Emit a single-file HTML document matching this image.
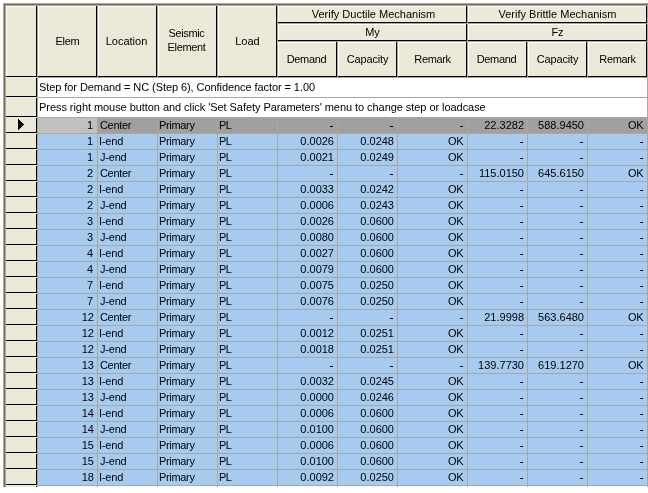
<!DOCTYPE html>
<html><head><meta charset="utf-8"><title>Safety Verification Table</title>
<style>
html,body{margin:0;padding:0;background:#fff;}
body{will-change:transform;}
body{width:648px;height:493px;position:relative;overflow:hidden;font-family:"Liberation Sans",sans-serif;font-size:11px;color:#000;}
div{position:absolute;box-sizing:border-box;white-space:nowrap;overflow:hidden;}
.h{background:#000;}
.h>i{position:absolute;left:0;top:0;right:1px;bottom:1px;background:#fff;}
.h>b{position:absolute;left:1px;top:1px;right:1px;bottom:1px;background:#ece9d8;font-weight:normal;text-align:center;}
.rh{left:6px;width:31px;background:#ece9d8;border-bottom:1px solid #000;}
.rh>i{position:absolute;right:0;top:1px;bottom:0;width:1px;background:#000;}
.c{background:#a6caf0;height:15px;line-height:15px;}
.r{text-align:right;padding-right:3px;}
.l{text-align:left;padding-left:2px;}
.c>u{font-size:0;line-height:0;text-decoration:none;position:absolute;right:4px;top:8px;width:3px;height:1px;background:#000;}
.g1{background:#c0c0c0;}
.g2{background:#a0a0a0;}
.w{background:#fff;height:19px;line-height:19px;padding-left:2px;}
</style></head><body>

<div style="left:3px;top:3px;width:645px;height:484px;background:#aca899"></div>
<div style="left:4px;top:4px;width:644px;height:483px;background:#716f64"></div>
<div style="left:5px;top:5px;width:643px;height:482px;background:#aca899"></div>
<div class="h" style="left:6px;top:6px;width:31px;height:71px"><i></i><b></b></div>
<div class="h" style="left:38px;top:6px;width:59px;height:71px"><i></i><b style="line-height:68px"><span style="letter-spacing:-0.3px;">Elem</span></b></div>
<div class="h" style="left:98px;top:6px;width:59px;height:71px"><i></i><b style="line-height:68px"><span style="position:relative;left:-1px;">Location</span></b></div>
<div class="h" style="left:158px;top:6px;width:59px;height:71px"><i></i><b style="line-height:14px;padding-top:19px"><span style="letter-spacing:-0.35px;position:relative;left:-1px;">Seismic<br>Element</span></b></div>
<div class="h" style="left:218px;top:6px;width:59px;height:71px"><i></i><b style="line-height:68px">Load</b></div>
<div class="h" style="left:278px;top:6px;width:189px;height:17px"><i></i><b style="line-height:15px"><span style="position:relative;left:1px;">Verify Ductile Mechanism</span></b></div>
<div class="h" style="left:468px;top:6px;width:179px;height:17px"><i></i><b style="line-height:15px">Verify Brittle Mechanism</b></div>
<div class="h" style="left:278px;top:24px;width:189px;height:17px"><i></i><b style="line-height:14px">My</b></div>
<div class="h" style="left:468px;top:24px;width:179px;height:17px"><i></i><b style="line-height:14px">Fz</b></div>
<div class="h" style="left:278px;top:42px;width:59px;height:35px"><i></i><b style="line-height:32px"><span style="letter-spacing:-0.35px;position:relative;left:-1px;">Demand</span></b></div>
<div class="h" style="left:338px;top:42px;width:59px;height:35px"><i></i><b style="line-height:32px"><span style="letter-spacing:-0.15px;">Capacity</span></b></div>
<div class="h" style="left:398px;top:42px;width:69px;height:35px"><i></i><b style="line-height:32px"><span style="letter-spacing:-0.35px;">Remark</span></b></div>
<div class="h" style="left:468px;top:42px;width:59px;height:35px"><i></i><b style="line-height:32px"><span style="letter-spacing:-0.35px;position:relative;left:-1px;">Demand</span></b></div>
<div class="h" style="left:528px;top:42px;width:59px;height:35px"><i></i><b style="line-height:32px"><span style="letter-spacing:-0.15px;">Capacity</span></b></div>
<div class="h" style="left:588px;top:42px;width:59px;height:35px"><i></i><b style="line-height:32px"><span style="letter-spacing:-0.35px;">Remark</span></b></div>
<div class="rh" style="top:77px;height:20px"><i></i></div>
<div class="rh" style="top:97px;height:20px"><i></i></div>
<div class="w" style="left:38px;top:78px;width:609px;letter-spacing:-0.074px;padding-left:1px">Step for Demand = NC (Step 6), Confidence factor = 1.00</div>
<div class="w" style="left:38px;top:98px;width:609px;letter-spacing:-0.057px;padding-left:1px">Press right mouse button and click 'Set Safety Parameters' menu to change step or loadcase</div>
<div class="rh" style="top:117px;height:16px"><i></i></div>
<div class="c r g1" style="left:38px;top:118px;width:59px"><span style="position:relative;left:-1px;">1</span></div>
<div class="c l g2" style="left:98px;top:118px;width:59px"><span style="letter-spacing:-0.33px;">Center</span></div>
<div class="c l g2" style="left:158px;top:118px;width:59px"><span style="letter-spacing:-0.33px;position:relative;left:-1px;">Primary</span></div>
<div class="c l g2" style="left:218px;top:118px;width:59px"><span style="letter-spacing:-0.5px;position:relative;left:-1px;">PL</span></div>
<div class="c r g2" style="left:278px;top:118px;width:59px"><u>-</u></div>
<div class="c r g2" style="left:338px;top:118px;width:59px"><u>-</u></div>
<div class="c r g2" style="left:398px;top:118px;width:69px"><u>-</u></div>
<div class="c r g2" style="left:468px;top:118px;width:59px">22.3282</div>
<div class="c r g2" style="left:528px;top:118px;width:59px">588.9450</div>
<div class="c r g2" style="left:588px;top:118px;width:59px"><span style="letter-spacing:-0.5px;position:relative;left:-1px;">OK</span></div>
<div class="rh" style="top:133px;height:16px"><i></i></div>
<div class="c r" style="left:38px;top:134px;width:59px"><span style="position:relative;left:-1px;">1</span></div>
<div class="c l" style="left:98px;top:134px;width:59px"><span style="letter-spacing:-0.2px;position:relative;left:-1px;">I-end</span></div>
<div class="c l" style="left:158px;top:134px;width:59px"><span style="letter-spacing:-0.33px;position:relative;left:-1px;">Primary</span></div>
<div class="c l" style="left:218px;top:134px;width:59px"><span style="letter-spacing:-0.5px;position:relative;left:-1px;">PL</span></div>
<div class="c r" style="left:278px;top:134px;width:59px">0.0026</div>
<div class="c r" style="left:338px;top:134px;width:59px">0.0248</div>
<div class="c r" style="left:398px;top:134px;width:69px"><span style="letter-spacing:-0.5px;position:relative;left:-1px;">OK</span></div>
<div class="c r" style="left:468px;top:134px;width:59px"><u>-</u></div>
<div class="c r" style="left:528px;top:134px;width:59px"><u>-</u></div>
<div class="c r" style="left:588px;top:134px;width:59px"><u>-</u></div>
<div class="rh" style="top:149px;height:16px"><i></i></div>
<div class="c r" style="left:38px;top:150px;width:59px"><span style="position:relative;left:-1px;">1</span></div>
<div class="c l" style="left:98px;top:150px;width:59px"><span style="letter-spacing:-0.2px;">J-end</span></div>
<div class="c l" style="left:158px;top:150px;width:59px"><span style="letter-spacing:-0.33px;position:relative;left:-1px;">Primary</span></div>
<div class="c l" style="left:218px;top:150px;width:59px"><span style="letter-spacing:-0.5px;position:relative;left:-1px;">PL</span></div>
<div class="c r" style="left:278px;top:150px;width:59px">0.0021</div>
<div class="c r" style="left:338px;top:150px;width:59px">0.0249</div>
<div class="c r" style="left:398px;top:150px;width:69px"><span style="letter-spacing:-0.5px;position:relative;left:-1px;">OK</span></div>
<div class="c r" style="left:468px;top:150px;width:59px"><u>-</u></div>
<div class="c r" style="left:528px;top:150px;width:59px"><u>-</u></div>
<div class="c r" style="left:588px;top:150px;width:59px"><u>-</u></div>
<div class="rh" style="top:165px;height:16px"><i></i></div>
<div class="c r" style="left:38px;top:166px;width:59px"><span style="position:relative;left:-1px;">2</span></div>
<div class="c l" style="left:98px;top:166px;width:59px"><span style="letter-spacing:-0.33px;">Center</span></div>
<div class="c l" style="left:158px;top:166px;width:59px"><span style="letter-spacing:-0.33px;position:relative;left:-1px;">Primary</span></div>
<div class="c l" style="left:218px;top:166px;width:59px"><span style="letter-spacing:-0.5px;position:relative;left:-1px;">PL</span></div>
<div class="c r" style="left:278px;top:166px;width:59px"><u>-</u></div>
<div class="c r" style="left:338px;top:166px;width:59px"><u>-</u></div>
<div class="c r" style="left:398px;top:166px;width:69px"><u>-</u></div>
<div class="c r" style="left:468px;top:166px;width:59px">115.0150</div>
<div class="c r" style="left:528px;top:166px;width:59px">645.6150</div>
<div class="c r" style="left:588px;top:166px;width:59px"><span style="letter-spacing:-0.5px;position:relative;left:-1px;">OK</span></div>
<div class="rh" style="top:181px;height:16px"><i></i></div>
<div class="c r" style="left:38px;top:182px;width:59px"><span style="position:relative;left:-1px;">2</span></div>
<div class="c l" style="left:98px;top:182px;width:59px"><span style="letter-spacing:-0.2px;position:relative;left:-1px;">I-end</span></div>
<div class="c l" style="left:158px;top:182px;width:59px"><span style="letter-spacing:-0.33px;position:relative;left:-1px;">Primary</span></div>
<div class="c l" style="left:218px;top:182px;width:59px"><span style="letter-spacing:-0.5px;position:relative;left:-1px;">PL</span></div>
<div class="c r" style="left:278px;top:182px;width:59px">0.0033</div>
<div class="c r" style="left:338px;top:182px;width:59px">0.0242</div>
<div class="c r" style="left:398px;top:182px;width:69px"><span style="letter-spacing:-0.5px;position:relative;left:-1px;">OK</span></div>
<div class="c r" style="left:468px;top:182px;width:59px"><u>-</u></div>
<div class="c r" style="left:528px;top:182px;width:59px"><u>-</u></div>
<div class="c r" style="left:588px;top:182px;width:59px"><u>-</u></div>
<div class="rh" style="top:197px;height:16px"><i></i></div>
<div class="c r" style="left:38px;top:198px;width:59px"><span style="position:relative;left:-1px;">2</span></div>
<div class="c l" style="left:98px;top:198px;width:59px"><span style="letter-spacing:-0.2px;">J-end</span></div>
<div class="c l" style="left:158px;top:198px;width:59px"><span style="letter-spacing:-0.33px;position:relative;left:-1px;">Primary</span></div>
<div class="c l" style="left:218px;top:198px;width:59px"><span style="letter-spacing:-0.5px;position:relative;left:-1px;">PL</span></div>
<div class="c r" style="left:278px;top:198px;width:59px">0.0006</div>
<div class="c r" style="left:338px;top:198px;width:59px">0.0243</div>
<div class="c r" style="left:398px;top:198px;width:69px"><span style="letter-spacing:-0.5px;position:relative;left:-1px;">OK</span></div>
<div class="c r" style="left:468px;top:198px;width:59px"><u>-</u></div>
<div class="c r" style="left:528px;top:198px;width:59px"><u>-</u></div>
<div class="c r" style="left:588px;top:198px;width:59px"><u>-</u></div>
<div class="rh" style="top:213px;height:16px"><i></i></div>
<div class="c r" style="left:38px;top:214px;width:59px"><span style="position:relative;left:-1px;">3</span></div>
<div class="c l" style="left:98px;top:214px;width:59px"><span style="letter-spacing:-0.2px;position:relative;left:-1px;">I-end</span></div>
<div class="c l" style="left:158px;top:214px;width:59px"><span style="letter-spacing:-0.33px;position:relative;left:-1px;">Primary</span></div>
<div class="c l" style="left:218px;top:214px;width:59px"><span style="letter-spacing:-0.5px;position:relative;left:-1px;">PL</span></div>
<div class="c r" style="left:278px;top:214px;width:59px">0.0026</div>
<div class="c r" style="left:338px;top:214px;width:59px">0.0600</div>
<div class="c r" style="left:398px;top:214px;width:69px"><span style="letter-spacing:-0.5px;position:relative;left:-1px;">OK</span></div>
<div class="c r" style="left:468px;top:214px;width:59px"><u>-</u></div>
<div class="c r" style="left:528px;top:214px;width:59px"><u>-</u></div>
<div class="c r" style="left:588px;top:214px;width:59px"><u>-</u></div>
<div class="rh" style="top:229px;height:16px"><i></i></div>
<div class="c r" style="left:38px;top:230px;width:59px"><span style="position:relative;left:-1px;">3</span></div>
<div class="c l" style="left:98px;top:230px;width:59px"><span style="letter-spacing:-0.2px;">J-end</span></div>
<div class="c l" style="left:158px;top:230px;width:59px"><span style="letter-spacing:-0.33px;position:relative;left:-1px;">Primary</span></div>
<div class="c l" style="left:218px;top:230px;width:59px"><span style="letter-spacing:-0.5px;position:relative;left:-1px;">PL</span></div>
<div class="c r" style="left:278px;top:230px;width:59px">0.0080</div>
<div class="c r" style="left:338px;top:230px;width:59px">0.0600</div>
<div class="c r" style="left:398px;top:230px;width:69px"><span style="letter-spacing:-0.5px;position:relative;left:-1px;">OK</span></div>
<div class="c r" style="left:468px;top:230px;width:59px"><u>-</u></div>
<div class="c r" style="left:528px;top:230px;width:59px"><u>-</u></div>
<div class="c r" style="left:588px;top:230px;width:59px"><u>-</u></div>
<div class="rh" style="top:245px;height:16px"><i></i></div>
<div class="c r" style="left:38px;top:246px;width:59px"><span style="position:relative;left:-1px;">4</span></div>
<div class="c l" style="left:98px;top:246px;width:59px"><span style="letter-spacing:-0.2px;position:relative;left:-1px;">I-end</span></div>
<div class="c l" style="left:158px;top:246px;width:59px"><span style="letter-spacing:-0.33px;position:relative;left:-1px;">Primary</span></div>
<div class="c l" style="left:218px;top:246px;width:59px"><span style="letter-spacing:-0.5px;position:relative;left:-1px;">PL</span></div>
<div class="c r" style="left:278px;top:246px;width:59px">0.0027</div>
<div class="c r" style="left:338px;top:246px;width:59px">0.0600</div>
<div class="c r" style="left:398px;top:246px;width:69px"><span style="letter-spacing:-0.5px;position:relative;left:-1px;">OK</span></div>
<div class="c r" style="left:468px;top:246px;width:59px"><u>-</u></div>
<div class="c r" style="left:528px;top:246px;width:59px"><u>-</u></div>
<div class="c r" style="left:588px;top:246px;width:59px"><u>-</u></div>
<div class="rh" style="top:261px;height:16px"><i></i></div>
<div class="c r" style="left:38px;top:262px;width:59px"><span style="position:relative;left:-1px;">4</span></div>
<div class="c l" style="left:98px;top:262px;width:59px"><span style="letter-spacing:-0.2px;">J-end</span></div>
<div class="c l" style="left:158px;top:262px;width:59px"><span style="letter-spacing:-0.33px;position:relative;left:-1px;">Primary</span></div>
<div class="c l" style="left:218px;top:262px;width:59px"><span style="letter-spacing:-0.5px;position:relative;left:-1px;">PL</span></div>
<div class="c r" style="left:278px;top:262px;width:59px">0.0079</div>
<div class="c r" style="left:338px;top:262px;width:59px">0.0600</div>
<div class="c r" style="left:398px;top:262px;width:69px"><span style="letter-spacing:-0.5px;position:relative;left:-1px;">OK</span></div>
<div class="c r" style="left:468px;top:262px;width:59px"><u>-</u></div>
<div class="c r" style="left:528px;top:262px;width:59px"><u>-</u></div>
<div class="c r" style="left:588px;top:262px;width:59px"><u>-</u></div>
<div class="rh" style="top:277px;height:16px"><i></i></div>
<div class="c r" style="left:38px;top:278px;width:59px"><span style="position:relative;left:-1px;">7</span></div>
<div class="c l" style="left:98px;top:278px;width:59px"><span style="letter-spacing:-0.2px;position:relative;left:-1px;">I-end</span></div>
<div class="c l" style="left:158px;top:278px;width:59px"><span style="letter-spacing:-0.33px;position:relative;left:-1px;">Primary</span></div>
<div class="c l" style="left:218px;top:278px;width:59px"><span style="letter-spacing:-0.5px;position:relative;left:-1px;">PL</span></div>
<div class="c r" style="left:278px;top:278px;width:59px">0.0075</div>
<div class="c r" style="left:338px;top:278px;width:59px">0.0250</div>
<div class="c r" style="left:398px;top:278px;width:69px"><span style="letter-spacing:-0.5px;position:relative;left:-1px;">OK</span></div>
<div class="c r" style="left:468px;top:278px;width:59px"><u>-</u></div>
<div class="c r" style="left:528px;top:278px;width:59px"><u>-</u></div>
<div class="c r" style="left:588px;top:278px;width:59px"><u>-</u></div>
<div class="rh" style="top:293px;height:16px"><i></i></div>
<div class="c r" style="left:38px;top:294px;width:59px"><span style="position:relative;left:-1px;">7</span></div>
<div class="c l" style="left:98px;top:294px;width:59px"><span style="letter-spacing:-0.2px;">J-end</span></div>
<div class="c l" style="left:158px;top:294px;width:59px"><span style="letter-spacing:-0.33px;position:relative;left:-1px;">Primary</span></div>
<div class="c l" style="left:218px;top:294px;width:59px"><span style="letter-spacing:-0.5px;position:relative;left:-1px;">PL</span></div>
<div class="c r" style="left:278px;top:294px;width:59px">0.0076</div>
<div class="c r" style="left:338px;top:294px;width:59px">0.0250</div>
<div class="c r" style="left:398px;top:294px;width:69px"><span style="letter-spacing:-0.5px;position:relative;left:-1px;">OK</span></div>
<div class="c r" style="left:468px;top:294px;width:59px"><u>-</u></div>
<div class="c r" style="left:528px;top:294px;width:59px"><u>-</u></div>
<div class="c r" style="left:588px;top:294px;width:59px"><u>-</u></div>
<div class="rh" style="top:309px;height:16px"><i></i></div>
<div class="c r" style="left:38px;top:310px;width:59px">12</div>
<div class="c l" style="left:98px;top:310px;width:59px"><span style="letter-spacing:-0.33px;">Center</span></div>
<div class="c l" style="left:158px;top:310px;width:59px"><span style="letter-spacing:-0.33px;position:relative;left:-1px;">Primary</span></div>
<div class="c l" style="left:218px;top:310px;width:59px"><span style="letter-spacing:-0.5px;position:relative;left:-1px;">PL</span></div>
<div class="c r" style="left:278px;top:310px;width:59px"><u>-</u></div>
<div class="c r" style="left:338px;top:310px;width:59px"><u>-</u></div>
<div class="c r" style="left:398px;top:310px;width:69px"><u>-</u></div>
<div class="c r" style="left:468px;top:310px;width:59px">21.9998</div>
<div class="c r" style="left:528px;top:310px;width:59px">563.6480</div>
<div class="c r" style="left:588px;top:310px;width:59px"><span style="letter-spacing:-0.5px;position:relative;left:-1px;">OK</span></div>
<div class="rh" style="top:325px;height:16px"><i></i></div>
<div class="c r" style="left:38px;top:326px;width:59px">12</div>
<div class="c l" style="left:98px;top:326px;width:59px"><span style="letter-spacing:-0.2px;position:relative;left:-1px;">I-end</span></div>
<div class="c l" style="left:158px;top:326px;width:59px"><span style="letter-spacing:-0.33px;position:relative;left:-1px;">Primary</span></div>
<div class="c l" style="left:218px;top:326px;width:59px"><span style="letter-spacing:-0.5px;position:relative;left:-1px;">PL</span></div>
<div class="c r" style="left:278px;top:326px;width:59px">0.0012</div>
<div class="c r" style="left:338px;top:326px;width:59px">0.0251</div>
<div class="c r" style="left:398px;top:326px;width:69px"><span style="letter-spacing:-0.5px;position:relative;left:-1px;">OK</span></div>
<div class="c r" style="left:468px;top:326px;width:59px"><u>-</u></div>
<div class="c r" style="left:528px;top:326px;width:59px"><u>-</u></div>
<div class="c r" style="left:588px;top:326px;width:59px"><u>-</u></div>
<div class="rh" style="top:341px;height:16px"><i></i></div>
<div class="c r" style="left:38px;top:342px;width:59px">12</div>
<div class="c l" style="left:98px;top:342px;width:59px"><span style="letter-spacing:-0.2px;">J-end</span></div>
<div class="c l" style="left:158px;top:342px;width:59px"><span style="letter-spacing:-0.33px;position:relative;left:-1px;">Primary</span></div>
<div class="c l" style="left:218px;top:342px;width:59px"><span style="letter-spacing:-0.5px;position:relative;left:-1px;">PL</span></div>
<div class="c r" style="left:278px;top:342px;width:59px">0.0018</div>
<div class="c r" style="left:338px;top:342px;width:59px">0.0251</div>
<div class="c r" style="left:398px;top:342px;width:69px"><span style="letter-spacing:-0.5px;position:relative;left:-1px;">OK</span></div>
<div class="c r" style="left:468px;top:342px;width:59px"><u>-</u></div>
<div class="c r" style="left:528px;top:342px;width:59px"><u>-</u></div>
<div class="c r" style="left:588px;top:342px;width:59px"><u>-</u></div>
<div class="rh" style="top:357px;height:16px"><i></i></div>
<div class="c r" style="left:38px;top:358px;width:59px">13</div>
<div class="c l" style="left:98px;top:358px;width:59px"><span style="letter-spacing:-0.33px;">Center</span></div>
<div class="c l" style="left:158px;top:358px;width:59px"><span style="letter-spacing:-0.33px;position:relative;left:-1px;">Primary</span></div>
<div class="c l" style="left:218px;top:358px;width:59px"><span style="letter-spacing:-0.5px;position:relative;left:-1px;">PL</span></div>
<div class="c r" style="left:278px;top:358px;width:59px"><u>-</u></div>
<div class="c r" style="left:338px;top:358px;width:59px"><u>-</u></div>
<div class="c r" style="left:398px;top:358px;width:69px"><u>-</u></div>
<div class="c r" style="left:468px;top:358px;width:59px">139.7730</div>
<div class="c r" style="left:528px;top:358px;width:59px">619.1270</div>
<div class="c r" style="left:588px;top:358px;width:59px"><span style="letter-spacing:-0.5px;position:relative;left:-1px;">OK</span></div>
<div class="rh" style="top:373px;height:16px"><i></i></div>
<div class="c r" style="left:38px;top:374px;width:59px">13</div>
<div class="c l" style="left:98px;top:374px;width:59px"><span style="letter-spacing:-0.2px;position:relative;left:-1px;">I-end</span></div>
<div class="c l" style="left:158px;top:374px;width:59px"><span style="letter-spacing:-0.33px;position:relative;left:-1px;">Primary</span></div>
<div class="c l" style="left:218px;top:374px;width:59px"><span style="letter-spacing:-0.5px;position:relative;left:-1px;">PL</span></div>
<div class="c r" style="left:278px;top:374px;width:59px">0.0032</div>
<div class="c r" style="left:338px;top:374px;width:59px">0.0245</div>
<div class="c r" style="left:398px;top:374px;width:69px"><span style="letter-spacing:-0.5px;position:relative;left:-1px;">OK</span></div>
<div class="c r" style="left:468px;top:374px;width:59px"><u>-</u></div>
<div class="c r" style="left:528px;top:374px;width:59px"><u>-</u></div>
<div class="c r" style="left:588px;top:374px;width:59px"><u>-</u></div>
<div class="rh" style="top:389px;height:16px"><i></i></div>
<div class="c r" style="left:38px;top:390px;width:59px">13</div>
<div class="c l" style="left:98px;top:390px;width:59px"><span style="letter-spacing:-0.2px;">J-end</span></div>
<div class="c l" style="left:158px;top:390px;width:59px"><span style="letter-spacing:-0.33px;position:relative;left:-1px;">Primary</span></div>
<div class="c l" style="left:218px;top:390px;width:59px"><span style="letter-spacing:-0.5px;position:relative;left:-1px;">PL</span></div>
<div class="c r" style="left:278px;top:390px;width:59px">0.0000</div>
<div class="c r" style="left:338px;top:390px;width:59px">0.0246</div>
<div class="c r" style="left:398px;top:390px;width:69px"><span style="letter-spacing:-0.5px;position:relative;left:-1px;">OK</span></div>
<div class="c r" style="left:468px;top:390px;width:59px"><u>-</u></div>
<div class="c r" style="left:528px;top:390px;width:59px"><u>-</u></div>
<div class="c r" style="left:588px;top:390px;width:59px"><u>-</u></div>
<div class="rh" style="top:405px;height:16px"><i></i></div>
<div class="c r" style="left:38px;top:406px;width:59px">14</div>
<div class="c l" style="left:98px;top:406px;width:59px"><span style="letter-spacing:-0.2px;position:relative;left:-1px;">I-end</span></div>
<div class="c l" style="left:158px;top:406px;width:59px"><span style="letter-spacing:-0.33px;position:relative;left:-1px;">Primary</span></div>
<div class="c l" style="left:218px;top:406px;width:59px"><span style="letter-spacing:-0.5px;position:relative;left:-1px;">PL</span></div>
<div class="c r" style="left:278px;top:406px;width:59px">0.0006</div>
<div class="c r" style="left:338px;top:406px;width:59px">0.0600</div>
<div class="c r" style="left:398px;top:406px;width:69px"><span style="letter-spacing:-0.5px;position:relative;left:-1px;">OK</span></div>
<div class="c r" style="left:468px;top:406px;width:59px"><u>-</u></div>
<div class="c r" style="left:528px;top:406px;width:59px"><u>-</u></div>
<div class="c r" style="left:588px;top:406px;width:59px"><u>-</u></div>
<div class="rh" style="top:421px;height:16px"><i></i></div>
<div class="c r" style="left:38px;top:422px;width:59px">14</div>
<div class="c l" style="left:98px;top:422px;width:59px"><span style="letter-spacing:-0.2px;">J-end</span></div>
<div class="c l" style="left:158px;top:422px;width:59px"><span style="letter-spacing:-0.33px;position:relative;left:-1px;">Primary</span></div>
<div class="c l" style="left:218px;top:422px;width:59px"><span style="letter-spacing:-0.5px;position:relative;left:-1px;">PL</span></div>
<div class="c r" style="left:278px;top:422px;width:59px">0.0100</div>
<div class="c r" style="left:338px;top:422px;width:59px">0.0600</div>
<div class="c r" style="left:398px;top:422px;width:69px"><span style="letter-spacing:-0.5px;position:relative;left:-1px;">OK</span></div>
<div class="c r" style="left:468px;top:422px;width:59px"><u>-</u></div>
<div class="c r" style="left:528px;top:422px;width:59px"><u>-</u></div>
<div class="c r" style="left:588px;top:422px;width:59px"><u>-</u></div>
<div class="rh" style="top:437px;height:16px"><i></i></div>
<div class="c r" style="left:38px;top:438px;width:59px">15</div>
<div class="c l" style="left:98px;top:438px;width:59px"><span style="letter-spacing:-0.2px;position:relative;left:-1px;">I-end</span></div>
<div class="c l" style="left:158px;top:438px;width:59px"><span style="letter-spacing:-0.33px;position:relative;left:-1px;">Primary</span></div>
<div class="c l" style="left:218px;top:438px;width:59px"><span style="letter-spacing:-0.5px;position:relative;left:-1px;">PL</span></div>
<div class="c r" style="left:278px;top:438px;width:59px">0.0006</div>
<div class="c r" style="left:338px;top:438px;width:59px">0.0600</div>
<div class="c r" style="left:398px;top:438px;width:69px"><span style="letter-spacing:-0.5px;position:relative;left:-1px;">OK</span></div>
<div class="c r" style="left:468px;top:438px;width:59px"><u>-</u></div>
<div class="c r" style="left:528px;top:438px;width:59px"><u>-</u></div>
<div class="c r" style="left:588px;top:438px;width:59px"><u>-</u></div>
<div class="rh" style="top:453px;height:16px"><i></i></div>
<div class="c r" style="left:38px;top:454px;width:59px">15</div>
<div class="c l" style="left:98px;top:454px;width:59px"><span style="letter-spacing:-0.2px;">J-end</span></div>
<div class="c l" style="left:158px;top:454px;width:59px"><span style="letter-spacing:-0.33px;position:relative;left:-1px;">Primary</span></div>
<div class="c l" style="left:218px;top:454px;width:59px"><span style="letter-spacing:-0.5px;position:relative;left:-1px;">PL</span></div>
<div class="c r" style="left:278px;top:454px;width:59px">0.0100</div>
<div class="c r" style="left:338px;top:454px;width:59px">0.0600</div>
<div class="c r" style="left:398px;top:454px;width:69px"><span style="letter-spacing:-0.5px;position:relative;left:-1px;">OK</span></div>
<div class="c r" style="left:468px;top:454px;width:59px"><u>-</u></div>
<div class="c r" style="left:528px;top:454px;width:59px"><u>-</u></div>
<div class="c r" style="left:588px;top:454px;width:59px"><u>-</u></div>
<div class="rh" style="top:469px;height:16px"><i></i></div>
<div class="c r" style="left:38px;top:470px;width:59px">18</div>
<div class="c l" style="left:98px;top:470px;width:59px"><span style="letter-spacing:-0.2px;position:relative;left:-1px;">I-end</span></div>
<div class="c l" style="left:158px;top:470px;width:59px"><span style="letter-spacing:-0.33px;position:relative;left:-1px;">Primary</span></div>
<div class="c l" style="left:218px;top:470px;width:59px"><span style="letter-spacing:-0.5px;position:relative;left:-1px;">PL</span></div>
<div class="c r" style="left:278px;top:470px;width:59px">0.0092</div>
<div class="c r" style="left:338px;top:470px;width:59px">0.0250</div>
<div class="c r" style="left:398px;top:470px;width:69px"><span style="letter-spacing:-0.5px;position:relative;left:-1px;">OK</span></div>
<div class="c r" style="left:468px;top:470px;width:59px"><u>-</u></div>
<div class="c r" style="left:528px;top:470px;width:59px"><u>-</u></div>
<div class="c r" style="left:588px;top:470px;width:59px"><u>-</u></div>
<div style="left:6px;top:485px;width:31px;height:2px;background:#ece9d8"></div>
<div style="left:36px;top:486px;width:1px;height:1px;background:#000"></div>
<div style="left:38px;top:486px;width:59px;height:1px;background:#fff"></div>
<div style="left:98px;top:486px;width:59px;height:1px;background:#fff"></div>
<div style="left:158px;top:486px;width:59px;height:1px;background:#fff"></div>
<div style="left:218px;top:486px;width:59px;height:1px;background:#fff"></div>
<div style="left:278px;top:486px;width:59px;height:1px;background:#fff"></div>
<div style="left:338px;top:486px;width:59px;height:1px;background:#fff"></div>
<div style="left:398px;top:486px;width:69px;height:1px;background:#fff"></div>
<div style="left:468px;top:486px;width:59px;height:1px;background:#fff"></div>
<div style="left:528px;top:486px;width:59px;height:1px;background:#fff"></div>
<div style="left:588px;top:486px;width:59px;height:1px;background:#fff"></div>
<svg style="position:absolute;left:18px;top:119px" width="6" height="11" viewBox="0 0 6 11" shape-rendering="crispEdges"><path d="M0 0h1v11h-1zM1 1h1v9h-1zM2 2h1v7h-1zM3 3h1v5h-1zM4 4h1v3h-1zM5 5h1v1h-1z" fill="#000"/></svg>
</body></html>
